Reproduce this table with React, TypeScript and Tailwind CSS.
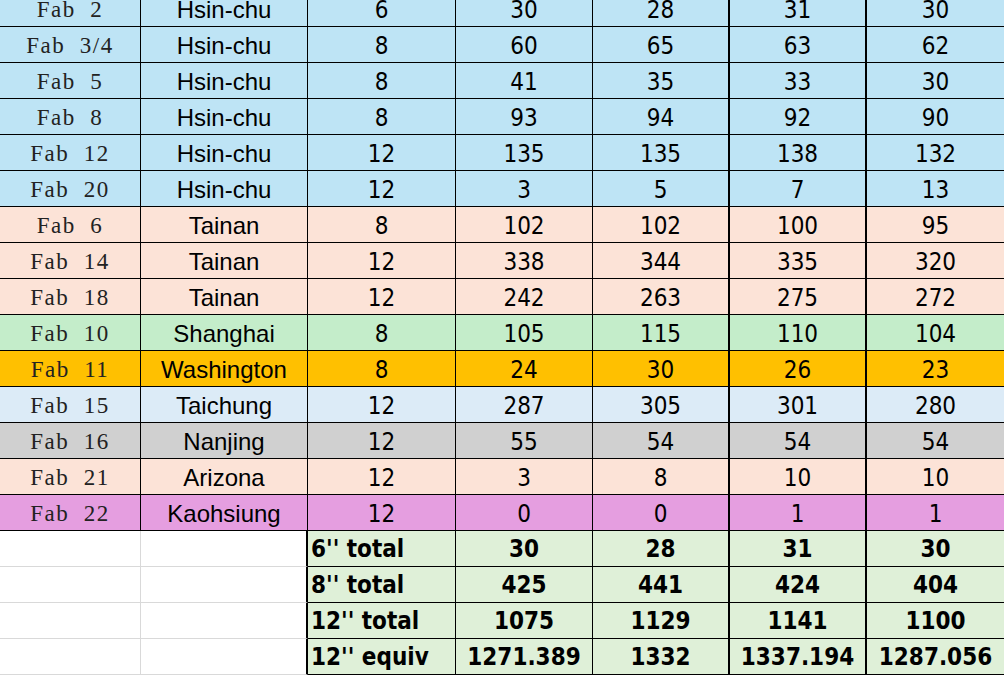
import React from "react";

type Row = { fab: string; city: string; size: string; v: string[]; bg: string };

const rows: Row[] = [
  { fab: "Fab  2", city: "Hsin-chu", size: "6", v: ["30", "28", "31", "30"], bg: "bg-[#bee4f5]" },
  { fab: "Fab  3/4", city: "Hsin-chu", size: "8", v: ["60", "65", "63", "62"], bg: "bg-[#bee4f5]" },
  { fab: "Fab  5", city: "Hsin-chu", size: "8", v: ["41", "35", "33", "30"], bg: "bg-[#bee4f5]" },
  { fab: "Fab  8", city: "Hsin-chu", size: "8", v: ["93", "94", "92", "90"], bg: "bg-[#bee4f5]" },
  { fab: "Fab  12", city: "Hsin-chu", size: "12", v: ["135", "135", "138", "132"], bg: "bg-[#bee4f5]" },
  { fab: "Fab  20", city: "Hsin-chu", size: "12", v: ["3", "5", "7", "13"], bg: "bg-[#bee4f5]" },
  { fab: "Fab  6", city: "Tainan", size: "8", v: ["102", "102", "100", "95"], bg: "bg-[#fce3d7]" },
  { fab: "Fab  14", city: "Tainan", size: "12", v: ["338", "344", "335", "320"], bg: "bg-[#fce3d7]" },
  { fab: "Fab  18", city: "Tainan", size: "12", v: ["242", "263", "275", "272"], bg: "bg-[#fce3d7]" },
  { fab: "Fab  10", city: "Shanghai", size: "8", v: ["105", "115", "110", "104"], bg: "bg-[#c4edca]" },
  { fab: "Fab  11", city: "Washington", size: "8", v: ["24", "30", "26", "23"], bg: "bg-[#ffc000]" },
  { fab: "Fab  15", city: "Taichung", size: "12", v: ["287", "305", "301", "280"], bg: "bg-[#dcebf7]" },
  { fab: "Fab  16", city: "Nanjing", size: "12", v: ["55", "54", "54", "54"], bg: "bg-[#d0d0d0]" },
  { fab: "Fab  21", city: "Arizona", size: "12", v: ["3", "8", "10", "10"], bg: "bg-[#fce3d7]" },
  { fab: "Fab  22", city: "Kaohsiung", size: "12", v: ["0", "0", "1", "1"], bg: "bg-[#e59ee0]" },
];

const totals: { label: string; v: string[] }[] = [
  { label: "6'' total", v: ["30", "28", "31", "30"] },
  { label: "8'' total", v: ["425", "441", "424", "404"] },
  { label: "12'' total", v: ["1075", "1129", "1141", "1100"] },
  { label: "12'' equiv", v: ["1271.389", "1332", "1337.194", "1287.056"] },
];

const numFont = "font-['DejaVu_Sans_Condensed','DejaVu_Sans',sans-serif] [font-stretch:condensed] text-[24px]";
const valWidths = ["w-[137px] border-r", "w-[137px] border-r-2", "w-[137px] border-r-2", "w-[137px]"];

export default function App() {
  return (
    <div className="w-[1004px] h-[675px] overflow-hidden bg-white">
      <div className="-mt-[9px] flex flex-col">
        {rows.map((r, i) => (
          <div key={i} className={`flex h-[36px] ${r.bg}`}>
            <div className="w-[141px] shrink-0 flex items-center justify-center border-b border-r border-black pt-[4px] font-['Liberation_Serif',serif] text-[23px] tracking-[1.5px] text-[#222] whitespace-pre">
              {r.fab}
            </div>
            <div className="w-[167px] shrink-0 flex items-center justify-center border-b border-r border-black font-['Liberation_Sans',Arial,sans-serif] text-[24px] text-black pt-[3px]">
              {r.city}
            </div>
            <div className={`w-[148px] shrink-0 flex items-center justify-center border-b border-r border-black ${numFont} text-black pt-[3px]`}>
              {r.size}
            </div>
            {r.v.map((x, j) => (
              <div
                key={j}
                className={`${valWidths[j]} shrink-0 flex items-center justify-center border-b border-black ${numFont} text-black pt-[3px]`}
              >
                {x}
              </div>
            ))}
          </div>
        ))}
        {totals.map((t, i) => (
          <div key={i} className="flex h-[36px]">
            <div className="w-[141px] shrink-0 bg-white border-b border-r border-[#d9d9d9]" />
            <div className="w-[167px] shrink-0 bg-white border-b border-[#d9d9d9] border-r-2 border-r-black" />
            <div className={`w-[148px] shrink-0 flex items-center justify-start pl-[3px] pt-[1px] bg-[#dff0d8] border-b border-r border-black ${numFont} font-bold text-black`}>
              {t.label}
            </div>
            {t.v.map((x, j) => (
              <div
                key={j}
                className={`${valWidths[j]} shrink-0 flex items-center justify-center pt-[1px] bg-[#dff0d8] border-b border-black ${numFont} font-bold text-black`}
              >
                {x}
              </div>
            ))}
          </div>
        ))}
      </div>
    </div>
  );
}
